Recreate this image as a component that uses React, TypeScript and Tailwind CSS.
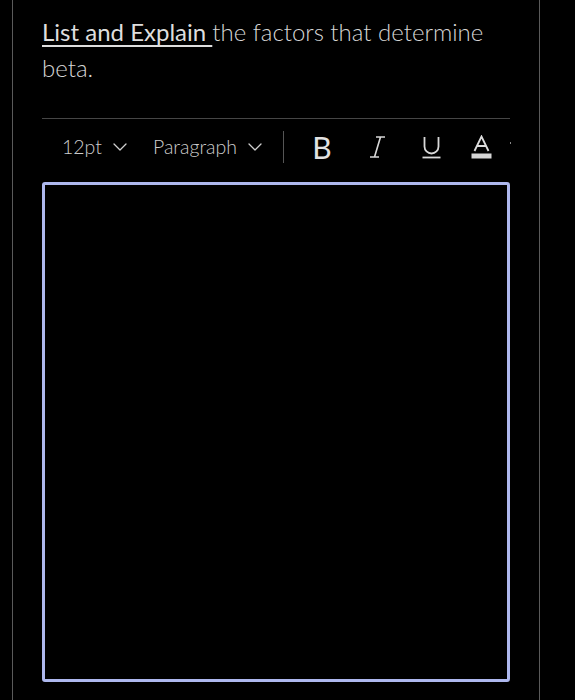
import React from "react";

function Chevron() {
  return (
    <svg width="16" height="10" viewBox="0 0 16 10" fill="none" className="ml-[10px]">
      <path d="M2 2 L8 8 L14 2" stroke="#cfcfcf" strokeWidth="1.3" strokeLinecap="round" strokeLinejoin="round" />
    </svg>
  );
}

export default function App() {
  return (
    <div className="w-[575px] h-[700px] bg-black flex" style={{ fontFamily: "Lato, 'Open Sans', sans-serif" }}>
      <div className="w-[12px]" />
      <div className="w-[1px] h-full bg-[#5a5a5a]" />
      <div className="flex-1 flex flex-col pl-[29px] pr-[28px]">
        <div className="pt-[14px] text-[24px] leading-[36px] text-[#d6d6d6] w-[468px]">
          <span className="font-normal underline underline-offset-[4px] decoration-[1.5px] text-[#dedede]">List and Explain </span>
          <span className="font-light">the factors that determine beta.</span>
        </div>
        <div className="mt-[32px] h-[1px] bg-[#464646] w-[468px]" />
        <div className="h-[63px] pb-[7px] flex items-center w-[468px] text-[#cdcdcd] font-light text-[19.5px]">
          <div className="flex items-center pl-[20px]">
            <span>12pt</span>
            <Chevron />
          </div>
          <div className="flex items-center ml-[25px]">
            <span>Paragraph</span>
            <Chevron />
          </div>
          <div className="ml-[20px] w-[1px] h-[32px] bg-[#555]" />
          <div className="ml-[29px] text-[30px] font-normal text-[#e2e2e2] leading-none" style={{ fontFamily: "Lato, sans-serif" }}>B</div>
          <div className="ml-[37px]">
            <svg width="17" height="24" viewBox="0 0 17 24">
              <path d="M7 2 H16 M1 22 H10 M11.5 2 L5.5 22" stroke="#d8d8d8" strokeWidth="1.6" fill="none" />
            </svg>
          </div>
          <div className="ml-[36px]">
            <svg width="19" height="24" viewBox="0 0 19 24">
              <path d="M2.5 2 V11.5 A7 7 0 0 0 16.5 11.5 V2" stroke="#d8d8d8" strokeWidth="1.8" fill="none" />
              <path d="M0.5 22.5 H18.5" stroke="#d8d8d8" strokeWidth="1.8" />
            </svg>
          </div>
          <div className="ml-[30px]">
            <svg width="21" height="24" viewBox="0 0 21 24">
              <path d="M3.5 16 L10.5 1.5 L17.5 16 M6 11 H15" stroke="#dcdcdc" strokeWidth="1.8" fill="none" />
              <rect x="0.5" y="18.5" width="20" height="5" fill="#d6d6d6" />
            </svg>
          </div>
          <div className="ml-[18px] w-[2px] h-[2px] bg-[#888] -mt-[8px]" />
        </div>
        <div className="h-[500px] w-[468px] border-[3px] border-[#aeb8ee] rounded-[3px]" />
      </div>
      <div className="w-[1px] h-full bg-[#5a5a5a]" />
      <div className="w-[35px]" />
    </div>
  );
}
